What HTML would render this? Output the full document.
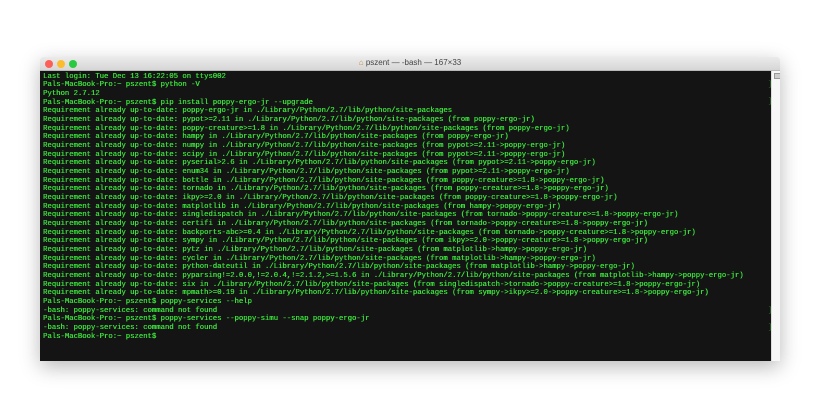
<!DOCTYPE html>
<html><head><meta charset="utf-8"><style>
html,body{margin:0;padding:0;background:#fff;width:820px;height:416px;overflow:hidden}
.win{position:absolute;left:40px;top:57px;width:740px;height:304px;background:#ececec;box-shadow:0 6px 20px rgba(0,0,0,0.28);border-radius:4px 4px 0 0;overflow:hidden}
.tb{position:absolute;left:0;top:0;width:740px;height:13px;background:linear-gradient(#ebebeb,#d6d6d6);border-bottom:1px solid #b8b8b8}
.dot{position:absolute;top:2.5px;width:8px;height:8px;border-radius:50%}
.title{position:absolute;left:0;width:740px;top:1px;text-align:center;font:8px "Liberation Sans",sans-serif;color:#444}
.term{position:absolute;left:0;top:14px;width:731px;height:290px;background:#141414}
.sb{position:absolute;left:731px;top:14px;width:9px;height:290px;background:#f7f7f7;border-left:1px solid #ddd}
pre{margin:0;position:absolute;left:3px;top:1.5px;font:7.26px/8.67px "Liberation Mono",monospace;color:#3be03b;white-space:pre;text-shadow:0.3px 0 0 #3be03b}
.br{position:absolute;left:728px;font:7px "Liberation Mono",monospace;color:#2a7a2a}
</style></head><body>
<div class="win">
<div class="tb">
<div class="dot" style="left:5px;background:#fc5f57"></div>
<div class="dot" style="left:17px;background:#fdbc2e"></div>
<div class="dot" style="left:29px;background:#29c940"></div>
<div class="title"><span style="color:#c98a3a">&#8962;</span> pszent — -bash — 167×33</div>
</div>
<div class="term">
<pre>Last login: Tue Dec 13 16:22:05 on ttys002
Pals-MacBook-Pro:~ pszent$ python -V
Python 2.7.12
Pals-MacBook-Pro:~ pszent$ pip install poppy-ergo-jr --upgrade
Requirement already up-to-date: poppy-ergo-jr in ./Library/Python/2.7/lib/python/site-packages
Requirement already up-to-date: pypot>=2.11 in ./Library/Python/2.7/lib/python/site-packages (from poppy-ergo-jr)
Requirement already up-to-date: poppy-creature>=1.8 in ./Library/Python/2.7/lib/python/site-packages (from poppy-ergo-jr)
Requirement already up-to-date: hampy in ./Library/Python/2.7/lib/python/site-packages (from poppy-ergo-jr)
Requirement already up-to-date: numpy in ./Library/Python/2.7/lib/python/site-packages (from pypot>=2.11->poppy-ergo-jr)
Requirement already up-to-date: scipy in ./Library/Python/2.7/lib/python/site-packages (from pypot>=2.11->poppy-ergo-jr)
Requirement already up-to-date: pyserial>2.6 in ./Library/Python/2.7/lib/python/site-packages (from pypot>=2.11->poppy-ergo-jr)
Requirement already up-to-date: enum34 in ./Library/Python/2.7/lib/python/site-packages (from pypot>=2.11->poppy-ergo-jr)
Requirement already up-to-date: bottle in ./Library/Python/2.7/lib/python/site-packages (from poppy-creature>=1.8->poppy-ergo-jr)
Requirement already up-to-date: tornado in ./Library/Python/2.7/lib/python/site-packages (from poppy-creature>=1.8->poppy-ergo-jr)
Requirement already up-to-date: ikpy>=2.0 in ./Library/Python/2.7/lib/python/site-packages (from poppy-creature>=1.8->poppy-ergo-jr)
Requirement already up-to-date: matplotlib in ./Library/Python/2.7/lib/python/site-packages (from hampy->poppy-ergo-jr)
Requirement already up-to-date: singledispatch in ./Library/Python/2.7/lib/python/site-packages (from tornado->poppy-creature>=1.8->poppy-ergo-jr)
Requirement already up-to-date: certifi in ./Library/Python/2.7/lib/python/site-packages (from tornado->poppy-creature>=1.8->poppy-ergo-jr)
Requirement already up-to-date: backports-abc>=0.4 in ./Library/Python/2.7/lib/python/site-packages (from tornado->poppy-creature>=1.8->poppy-ergo-jr)
Requirement already up-to-date: sympy in ./Library/Python/2.7/lib/python/site-packages (from ikpy>=2.0->poppy-creature>=1.8->poppy-ergo-jr)
Requirement already up-to-date: pytz in ./Library/Python/2.7/lib/python/site-packages (from matplotlib->hampy->poppy-ergo-jr)
Requirement already up-to-date: cycler in ./Library/Python/2.7/lib/python/site-packages (from matplotlib->hampy->poppy-ergo-jr)
Requirement already up-to-date: python-dateutil in ./Library/Python/2.7/lib/python/site-packages (from matplotlib->hampy->poppy-ergo-jr)
Requirement already up-to-date: pyparsing!=2.0.0,!=2.0.4,!=2.1.2,>=1.5.6 in ./Library/Python/2.7/lib/python/site-packages (from matplotlib->hampy->poppy-ergo-jr)
Requirement already up-to-date: six in ./Library/Python/2.7/lib/python/site-packages (from singledispatch->tornado->poppy-creature>=1.8->poppy-ergo-jr)
Requirement already up-to-date: mpmath>=0.19 in ./Library/Python/2.7/lib/python/site-packages (from sympy->ikpy>=2.0->poppy-creature>=1.8->poppy-ergo-jr)
Pals-MacBook-Pro:~ pszent$ poppy-services --help
-bash: poppy-services: command not found
Pals-MacBook-Pro:~ pszent$ poppy-services --poppy-simu --snap poppy-ergo-jr
-bash: poppy-services: command not found
Pals-MacBook-Pro:~ pszent$</pre>
<div class="br" style="top:10px">]</div>
<div class="br" style="top:27px">]</div>
<div class="br" style="top:236px">]</div>
<div class="br" style="top:253px">]</div>
</div>
<div class="sb"><div style="position:absolute;left:2px;top:2px;width:5px;height:4px;border:1px solid #999;background:#ccc"></div></div>
</div>
</body></html>
